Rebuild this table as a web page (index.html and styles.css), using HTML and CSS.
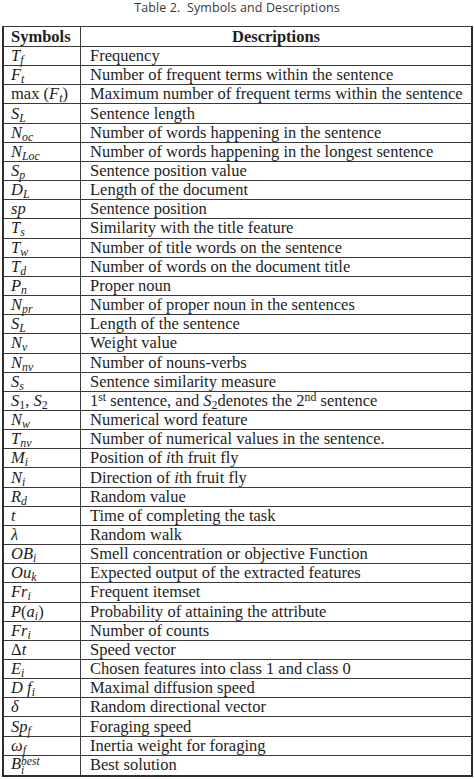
FILE: index.html
```html
<!DOCTYPE html>
<html>
<head>
<meta charset="utf-8">
<link rel="stylesheet" href="styles.css">
</head>
<body>
<div class="caption">Table 2.&nbsp; Symbols and Descriptions</div>
<table class="sym">
<thead>
<tr><th class="c1">Symbols</th><th class="c2">Descriptions</th></tr>
</thead>
<tbody>
<tr><td class="c1"><i>T<sub>f</sub></i></td><td>Frequency</td></tr>
<tr><td class="c1"><i>F<sub>t</sub></i></td><td>Number of frequent terms within the sentence</td></tr>
<tr><td class="c1">max (<i>F<sub>t</sub></i>)</td><td>Maximum number of frequent terms within the sentence</td></tr>
<tr><td class="c1"><i>S<sub>L</sub></i></td><td>Sentence length</td></tr>
<tr><td class="c1"><i>N<sub>oc</sub></i></td><td>Number of words happening in the sentence</td></tr>
<tr><td class="c1"><i>N<sub>Loc</sub></i></td><td>Number of words happening in the longest sentence</td></tr>
<tr><td class="c1"><i>S<sub>p</sub></i></td><td>Sentence position value</td></tr>
<tr><td class="c1"><i>D<sub>L</sub></i></td><td>Length of the document</td></tr>
<tr><td class="c1"><i>sp</i></td><td>Sentence position</td></tr>
<tr><td class="c1"><i>T<sub>s</sub></i></td><td>Similarity with the title feature</td></tr>
<tr><td class="c1"><i>T<sub>w</sub></i></td><td>Number of title words on the sentence</td></tr>
<tr><td class="c1"><i>T<sub>d</sub></i></td><td>Number of words on the document title</td></tr>
<tr><td class="c1"><i>P<sub>n</sub></i></td><td>Proper noun</td></tr>
<tr><td class="c1"><i>N<sub>pr</sub></i></td><td>Number of proper noun in the sentences</td></tr>
<tr><td class="c1"><i>S<sub>L</sub></i></td><td>Length of the sentence</td></tr>
<tr><td class="c1"><i>N<sub>v</sub></i></td><td>Weight value</td></tr>
<tr><td class="c1"><i>N<sub>nv</sub></i></td><td>Number of nouns-verbs</td></tr>
<tr><td class="c1"><i>S<sub>s</sub></i></td><td>Sentence similarity measure</td></tr>
<tr><td class="c1"><i>S</i><sub>1</sub>, <i>S</i><sub>2</sub></td><td>1<sup>st</sup> sentence, and <i>S</i><sub>2</sub>denotes the 2<sup>nd</sup> sentence</td></tr>
<tr><td class="c1"><i>N<sub>w</sub></i></td><td>Numerical word feature</td></tr>
<tr><td class="c1"><i>T<sub>nv</sub></i></td><td>Number of numerical values in the sentence.</td></tr>
<tr><td class="c1"><i>M<sub>i</sub></i></td><td>Position of <i>i</i>th fruit fly</td></tr>
<tr><td class="c1"><i>N<sub>i</sub></i></td><td>Direction of <i>i</i>th fruit fly</td></tr>
<tr><td class="c1"><i>R<sub>d</sub></i></td><td>Random value</td></tr>
<tr><td class="c1"><i>t</i></td><td>Time of completing the task</td></tr>
<tr><td class="c1"><i>λ</i></td><td>Random walk</td></tr>
<tr><td class="c1"><i>OB<sub>i</sub></i></td><td>Smell concentration or objective Function</td></tr>
<tr><td class="c1"><i>Ou<sub>k</sub></i></td><td>Expected output of the extracted features</td></tr>
<tr><td class="c1"><i>Fr<sub>i</sub></i></td><td>Frequent itemset</td></tr>
<tr><td class="c1"><i>P</i>(<i>a<sub>i</sub></i>)</td><td>Probability of attaining the attribute</td></tr>
<tr><td class="c1"><i>Fr<sub>i</sub></i></td><td>Number of counts</td></tr>
<tr><td class="c1">Δ<i>t</i></td><td>Speed vector</td></tr>
<tr><td class="c1"><i>E<sub>i</sub></i></td><td>Chosen features into class 1 and class 0</td></tr>
<tr><td class="c1"><i>D f<sub>i</sub></i></td><td>Maximal diffusion speed</td></tr>
<tr><td class="c1"><i>δ</i></td><td>Random directional vector</td></tr>
<tr><td class="c1"><i>Sp<sub>f</sub></i></td><td>Foraging speed</td></tr>
<tr><td class="c1"><i>ω<sub>f</sub></i></td><td>Inertia weight for foraging</td></tr>
<tr><td class="c1"><i>B</i><span class="supsub"><i class="up">best</i><i class="dn">i</i></span></td><td>Best solution</td></tr>
</tbody>
</table>
</body>
</html>
```
FILE: styles.css
```css
html, body {
  margin: 0;
  padding: 0;
  background: #ffffff;
}
body {
  width: 474px;
  height: 779px;
  overflow: hidden;
}
.caption {
  height: 25px;
  padding-top: 1px;
  font-family: "Open Sans", "DejaVu Sans", sans-serif;
  font-size: 12.5px;
  line-height: 13px;
  color: #3a3a3a;
  text-align: center;
  letter-spacing: 0.1px;
}
.sym {
  margin-left: 2px;
  width: 471px;
  border-collapse: collapse;
  table-layout: fixed;
  font-family: "Liberation Serif", "Times New Roman", serif;
  font-size: 16.5px;
  color: #1e1e1e;
  border: 2px solid #2d2d2d;
  border-top-width: 1.5px;
}
.sym th, .sym td {
  border: 1px solid #3a3a3a;
  padding: 0 0 0 9px;
  height: 18.17px;
  line-height: 16px;
  vertical-align: middle;
  white-space: nowrap;
  overflow: visible;
}
.sym th {
  height: 19px;
  font-weight: bold;
  font-size: 16.5px;
  text-align: left;
}
.sym th.c2 {
  text-align: center;
  padding-left: 0;
}
.sym .c1 {
  width: 69px;
  padding-left: 7px;
}
.sym sub, .sym sup {
  font-size: 0.72em;
  line-height: 0;
}
.sym sub {
  vertical-align: -0.22em;
}
.sym sup {
  vertical-align: 0.45em;
}
.supsub {
  display: inline-block;
  vertical-align: -0.45em;
  line-height: 9px;
  font-size: 0.7em;
}
.supsub i {
  display: block;
}
```
